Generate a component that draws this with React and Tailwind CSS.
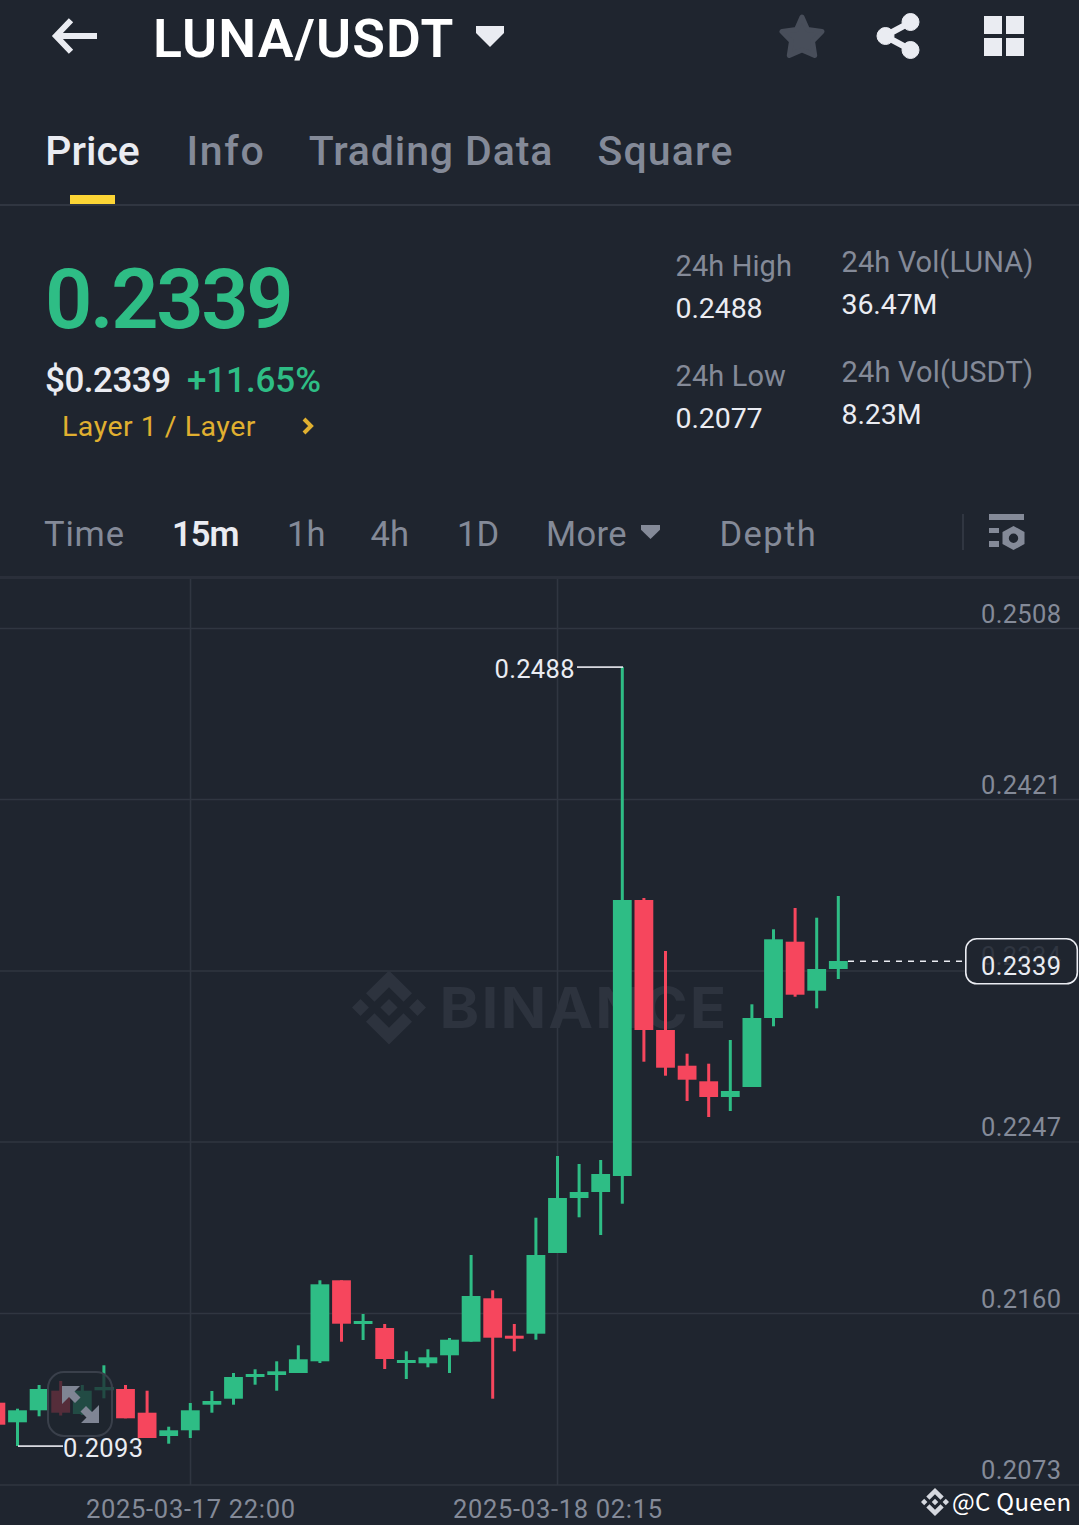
import { useState } from "react";

const GREEN = "#2ebd85";
const RED = "#f6465d";
const GRID = "#303641";

// [side, body top, body bottom, wick top, wick bottom]
const CANDLES = [
  ["r", 1402.7, 1424.7, 1402.7, 1424.7],
  ["g", 1410.3, 1422.3, 1408.7, 1446],
  ["g", 1389, 1410.3, 1385, 1416.3],
  ["r", 1390.7, 1412.7, 1381, 1415.5],
  ["g", 1390.7, 1414, 1385, 1415],
  ["g", 1387, 1390.3, 1365.3, 1398.3],
  ["r", 1389, 1418.3, 1385, 1418.3],
  ["r", 1412.7, 1438, 1390.7, 1438],
  ["g", 1430.3, 1436, 1426.7, 1443.7],
  ["g", 1410.3, 1430.3, 1403, 1438],
  ["g", 1401, 1404.7, 1391, 1412.7],
  ["g", 1377, 1398.7, 1373, 1404.7],
  ["g", 1374, 1377, 1369.3, 1384.7],
  ["g", 1371.3, 1375, 1361.3, 1390.7],
  ["g", 1359.3, 1373, 1345.3, 1373],
  ["g", 1284.3, 1361.3, 1280.3, 1363],
  ["r", 1280.3, 1323.7, 1280.3, 1341.7],
  ["g", 1321, 1324, 1314, 1340],
  ["r", 1328, 1359, 1324, 1369],
  ["g", 1360, 1363, 1351.3, 1379],
  ["g", 1357.3, 1363.3, 1349.3, 1367.3],
  ["g", 1339.7, 1355.3, 1338, 1373],
  ["g", 1296, 1341.7, 1255, 1341.7],
  ["r", 1298.3, 1337.7, 1290.3, 1398.7],
  ["r", 1335.7, 1338.7, 1324, 1351.3],
  ["g", 1255, 1333.7, 1217.7, 1339.7],
  ["g", 1198, 1253, 1156, 1253],
  ["g", 1192, 1198, 1164, 1217.3],
  ["g", 1174, 1192, 1160, 1235],
  ["g", 900, 1176, 667, 1203.7],
  ["r", 900, 1030, 898, 1061.7],
  ["r", 1030, 1067.7, 951, 1075.7],
  ["r", 1065.7, 1079.7, 1053.7, 1101],
  ["r", 1081.3, 1097, 1063.7, 1117],
  ["g", 1091, 1097, 1040, 1111],
  ["g", 1018, 1087, 1004.3, 1087],
  ["g", 939.3, 1018, 929.3, 1026.3],
  ["r", 941.7, 994.7, 908, 996.7],
  ["g", 969, 990.7, 917.7, 1008.3],
  ["g", 961, 969, 896, 979],
];

const PRICE_LINES = [
  { y: 628.5, label: "0.2508" },
  { y: 799.5, label: "0.2421" },
  { y: 971 },
  { y: 1142, label: "0.2247" },
  { y: 1313.5, label: "0.2160" },
  { y: 1485, label: "0.2073" },
];

const TIME_LINES = [
  { x: 190.5, label: "2025-03-17 22:00", from: 87 },
  { x: 557.5, label: "2025-03-18 02:15", from: 454 },
];

const TABS = [
  { label: "Price", cls: "w-[94px] mr-[47px] tracking-[0px]" },
  { label: "Info", cls: "w-[79px] mr-[43px] tracking-[1.7px]" },
  { label: "Trading Data", cls: "w-[245px] mr-[43px] tracking-[0.9px]" },
  { label: "Square", cls: "w-[138px] tracking-[1.2px]" },
];

const MARK = "M38.2 53.2 63 28.4l24.8 24.8 14.4-14.4L63 0 23.8 38.8zM0 63l14.4-14.4L28.8 63 14.4 77.4zM38.2 72.8 63 97.6l24.8-24.8 14.4 14.4L63 126 23.8 87.2zM97.2 63l14.4-14.4L126 63l-14.4 14.4zM77.6 63 63 48.4 48.4 63 63 77.6z";

function Caret({ className }) {
  return (
    <svg viewBox="0 0 28 21" className={className} fill="currentColor" preserveAspectRatio="none">
      <path d="M0 0h28v7L14 21 0 7z" />
    </svg>
  );
}

function Header() {
  return (
    <header className="flex h-[72px] items-center pl-[51px] pr-[55px] text-[#eaecf2]">
      <svg viewBox="0 0 46 36" className="h-9 w-[46px]" fill="none" stroke="currentColor" strokeWidth="6">
        <path d="M46 18H6M20 2.2 5 18l15 15.8" />
      </svg>
      <h1 className="ml-[56px] w-[302px] whitespace-nowrap pt-[5px] text-[53.5px] font-semibold leading-[72px] tracking-[1.1px] text-white">LUNA/USDT</h1>
      <Caret className="ml-[21px] h-[21px] w-7" />
      <svg viewBox="0 0 46 46" className="ml-auto h-[46px] w-[46px] text-[#484e5a]" fill="currentColor" stroke="currentColor" strokeWidth="5" strokeLinejoin="round">
        <path d="m23 4 5.5 12.5 14.5 2-9.5 9.7 2.2 14.3L23 37l-12.700 5.500 2.200-14.300L3 18.500l14.500-2z" />
      </svg>
      <svg viewBox="0 0 44 46" className="ml-[51px] h-[46px] w-11" fill="currentColor" stroke="currentColor">
        <path d="M35 9 9 23l26 14" fill="none" strokeWidth="6.5" />
        <circle cx="9.5" cy="23" r="8.5" />
        <circle cx="34.5" cy="9" r="8.5" />
        <circle cx="34.5" cy="37" r="8.5" />
      </svg>
      <div className="ml-16 grid grid-cols-2 gap-1">
        <i className="h-[18px] w-[18px] bg-current" />
        <i className="h-[18px] w-[18px] bg-current" />
        <i className="h-[18px] w-[18px] bg-current" />
        <i className="h-[18px] w-[18px] bg-current" />
      </div>
    </header>
  );
}

function Tabs() {
  const [active, setActive] = useState("Price");
  return (
    <nav className="flex h-[134px] border-b-2 border-[#303641] pl-[45px] pt-[49px] text-[41px] font-medium leading-[60px]">
      {TABS.map((t) => (
        <button
          key={t.label}
          onClick={() => setActive(t.label)}
          className={`flex flex-col items-center whitespace-nowrap ${t.cls} ${active === t.label ? "text-[#eaecf2]" : "text-[#848a98]"}`}
        >
          <span className="pl-px">{t.label}</span>
          {active === t.label && <span className="mt-[14px] h-[9px] w-[45px] bg-[#fcd535]" />}
        </button>
      ))}
    </nav>
  );
}

function Stat({ label, value, labelCls }) {
  return (
    <div className="h-[110px] whitespace-nowrap">
      <div className={`text-[29px] leading-[42px] text-[#848a98] ${labelCls}`}>{label}</div>
      <div className="text-[28.5px] leading-[44px] tracking-[-0.1px] text-[#eaecf2]">{value}</div>
    </div>
  );
}

function Summary() {
  return (
    <section className="flex h-[286px]">
      <div className="w-[675.5px] pl-[45px] pt-[44px]">
        <div className="text-[83px] font-semibold leading-[100px] tracking-[-2.4px] text-[#2ebd85]">0.2339</div>
        <div className="flex pt-[8px] text-[35px] font-medium leading-[46px]">
          <span className="w-[142px] tracking-[-0.5px] text-[#eaecf2]">$0.2339</span>
          <span className="tracking-[-0.1px] text-[#2ebd85]">+11.65%</span>
        </div>
        <div className="flex items-center pl-[17px] text-[28.5px] leading-[46px] text-[#e0b030]">
          <span className="w-[240px] tracking-[0.5px]">Layer 1 / Layer</span>
          <svg viewBox="0 0 12 18" className="-mt-[2px] h-[18px] w-3" fill="none" stroke="currentColor" strokeWidth="4">
            <path d="m2 2 7 7-7 7" />
          </svg>
        </div>
      </div>
      <div className="w-[166px] pt-[39px]">
        <Stat label="24h High" value="0.2488" labelCls="tracking-[0.1px]" />
        <Stat label="24h Low" value="0.2077" labelCls="tracking-[0.1px]" />
      </div>
      <div className="pt-[35px]">
        <Stat label="24h Vol(LUNA)" value="36.47M" labelCls="tracking-[0.1px]" />
        <Stat label="24h Vol(USDT)" value="8.23M" labelCls="tracking-[0.2px]" />
      </div>
    </section>
  );
}

function IntervalBar() {
  return (
    <div className="flex h-[87px] items-center whitespace-nowrap border-b-[3px] border-[#2a2f3a] pl-[44px] pr-[54px] text-[34.5px] leading-[46px] text-[#848a98]">
      <span className="w-[128px] tracking-[0.8px]">Time</span>
      <span className="w-[115px] font-semibold tracking-[-0.9px] text-[#eaecf2]">15m</span>
      <span className="w-[83.5px]">1h</span>
      <span className="w-[86.500px]">4h</span>
      <span className="w-[89px]">1D</span>
      <span className="w-[94.5px] tracking-[0.4px]">More</span>
      <Caret className="-mt-[4px] h-[14px] w-[19px]" />
      <span className="ml-[60px] tracking-[1.4px]">Depth</span>
      <i className="-mt-[5px] ml-auto h-9 w-[2px] bg-[#303641]" />
      <svg viewBox="0 0 36 36" className="-mt-[5px] ml-[25px] h-9 w-9" fill="currentColor">
        <path d="M0 0h35v6H0zM0 14h10v5H0zM0 27h10v6H0z" />
        <path fillRule="evenodd" d="m24.5 12 11 6v12l-11 6-11-6V18zm0 7.500a4.700 4.700 0 1 0 0 9.400 4.700 4.700 0 0 0 0-9.400z" />
      </svg>
    </div>
  );
}

function Chart() {
  return (
    <div className="relative h-[946px] overflow-hidden">
      <svg viewBox="0 579 1079 946" className="block h-[946px] w-[1079px]" fontSize="25.5">
        <g stroke={GRID} strokeWidth="1.6">
          {PRICE_LINES.map((l) => <line key={l.y} x1="0" x2="1079" y1={l.y} y2={l.y} />)}
          {TIME_LINES.map((l) => <line key={l.x} x1={l.x} x2={l.x} y1="579" y2="1485" />)}
        </g>

        {/* Watermark */}
        <g fill="#2d333e">
          <svg x="352" y="970" width="74" height="75" viewBox="0 0 126 126">
            <path d={MARK} />
          </svg>
          <text x="439.5" y="1028" fontSize="57" fontWeight="700" textLength="289" lengthAdjust="spacingAndGlyphs" className="font-['Inter',sans-serif] tracking-[2px]">BINANCE</text>
        </g>

        {CANDLES.map(([side, top, bottom, high, low], i) => {
          const cx = 17.5 + 21.6 * (i - 1);
          const fill = side === "g" ? GREEN : RED;
          return (
            <g key={i} fill={fill}>
              <rect x={cx - 1.5} y={high} width="3" height={low - high} />
              <rect x={cx - 9.4} y={top} width="18.8" height={bottom - top} />
            </g>
          );
        })}

        {/* Axis labels */}
        <g fill="#848a98">
          {PRICE_LINES.filter((l) => l.label).map((l) => (
            <text key={l.label} x="981" y={l.y - 5.7} textLength="80">{l.label}</text>
          ))}
          {TIME_LINES.map((l) => (
            <text key={l.label} x={l.from - 1} y="1517.7" textLength="209">{l.label}</text>
          ))}
        </g>

        {/* High and low markers */}
        <g fill="#eaecf2">
          <text x="494.5" y="677.7" textLength="80">0.2488</text>
          <text x="63" y="1456.7" textLength="80">0.2093</text>
          <rect x="577" y="666.3" width="46" height="1.6" />
          <rect x="18" y="1445.3" width="45" height="1.6" />
        </g>

        {/* Last price, over the dimmed axis label */}
        <line x1="848" x2="965" y1="961.3" y2="961.3" stroke="#eaecf2" strokeWidth="1.6" strokeDasharray="6 6" />
        <rect x="965.8" y="938.8" width="111.5" height="45" rx="11" fill="#1f252f" stroke="#eaecf2" strokeWidth="1.6" />
        <text x="981" y="965" fill="#303641" textLength="80">0.2334</text>
        <text x="981" y="974.5" fill="#eaecf2" textLength="80">0.2339</text>
      </svg>

      <button className="absolute left-[47px] top-[792px] flex h-[66px] w-[66px] items-center justify-center rounded-[17px] border-2 border-[#3a404b] bg-[#1f252f]/75 text-[#7f8594]">
        <svg viewBox="0 0 37 37" className="h-[37px] w-[37px]" fill="currentColor">
          <path d="M0 0h18l-5.500 5.500 6 6-5.500 5.500-6-6L0 18zM37 37H19l5.500-5.500-6-6L24 20l6 6 7-7z" />
        </svg>
      </button>

      <div className="absolute bottom-[9px] left-[921px] flex items-center whitespace-nowrap font-['Noto_Sans_CJK_SC',sans-serif] text-[24px] leading-[30px] text-white">
        <svg viewBox="0 0 126 126" className="h-7 w-7 text-[#d5d8df]" fill="currentColor">
          <path d={MARK} />
        </svg>
        <span className="-mt-[2px] ml-[3px] tracking-[0.3px]">@C Queen</span>
      </div>
    </div>
  );
}

export default function App() {
  return (
    <main className="h-[1525px] w-[1079px] overflow-hidden bg-[#1f252f] font-['Roboto',sans-serif]">
      <Header />
      <Tabs />
      <Summary />
      <IntervalBar />
      <Chart />
    </main>
  );
}
